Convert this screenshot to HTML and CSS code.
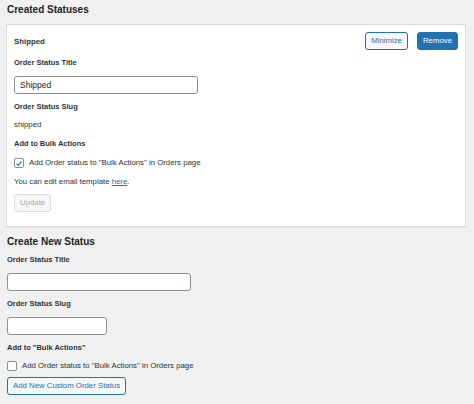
FILE: index.html
```html
<!DOCTYPE html>
<html>
<head>
<meta charset="utf-8">
<link rel="stylesheet" href="styles.css">
</head>
<body>
<div class="page">
  <h2 class="heading">Created Statuses</h2>
  <div class="card">
    <div class="card-head">
      <span class="status-name">Shipped</span>
      <div class="actions">
        <button class="btn btn-outline">Minimize</button>
        <button class="btn btn-primary">Remove</button>
      </div>
    </div>
    <div class="label">Order Status Title</div>
    <input class="input input-wide" type="text" value="Shipped">
    <div class="label">Order Status Slug</div>
    <div class="text">shipped</div>
    <div class="label">Add to Bulk Actions</div>
    <label class="check-row"><span class="checkbox checked"><svg viewBox="0 0 10 10" width="9" height="9"><path d="M2 5.2 L4.2 7.4 L8.2 2.4" fill="none" stroke="#2271b1" stroke-width="1.4"/></svg></span>Add Order status to "Bulk Actions" in Orders page</label>
    <div class="text text-note">You can edit email template <a href="#" class="link">here</a>.</div>
    <button class="btn btn-disabled">Update</button>
  </div>
  <h2 class="heading heading-new">Create New Status</h2>
  <div class="new-form">
    <div class="label">Order Status Title</div>
    <input class="input input-wide" type="text">
    <div class="label">Order Status Slug</div>
    <input class="input input-short" type="text">
    <div class="label">Add to "Bulk Actions"</div>
    <label class="check-row"><span class="checkbox"></span>Add Order status to "Bulk Actions" in Orders page</label>
    <button class="btn btn-outline">Add New Custom Order Status</button>
  </div>
</div>
</body>
</html>
```
FILE: styles.css
```css
html, body {
  margin: 0;
  padding: 0;
  background: #f0f0f1;
  font-family: "Liberation Sans", Arial, sans-serif;
  color: #1d2327;
}
.page {
  padding: 3px 8px 0 7px;
  width: 459px;
}
.heading {
  font-size: 10px;
  font-weight: bold;
  margin: 0;
  height: 21px;
  line-height: 14px;
}
.heading-new {
  margin-top: 8px;
  height: 20px;
}
.card {
  background: #fff;
  border: 1px solid #dcdcde;
  box-shadow: 0 1px 1px rgba(0,0,0,0.04);
  margin-left: -1px;
  padding: 6px 7px 14px 7px;
  display: flex;
  flex-direction: column;
  align-items: flex-start;
}
.card-head {
  display: flex;
  justify-content: space-between;
  align-items: center;
  width: 100%;
  height: 20px;
  margin-bottom: 7px;
}
.actions {
  display: flex;
  gap: 9px;
}
.status-name {
  font-size: 7.8px;
  font-weight: bold;
  color: #2c3338;
}
.label {
  font-size: 7.5px;
  font-weight: bold;
  color: #2c3338;
  line-height: 10px;
  margin-bottom: 8px;
}
.text {
  font-size: 7.8px;
  line-height: 10px;
  margin-bottom: 9px;
  color: #2c3338;
}
.text-note {
  margin-bottom: 7px;
}
.input {
  box-sizing: border-box;
  height: 18px;
  border: 1px solid #8c8f94;
  border-radius: 3px;
  background: #fff;
  font-family: inherit;
  font-size: 8.5px;
  padding: 0 5px;
  color: #1d2327;
  margin: 0 0 8px 0;
  display: block;
}
.input-wide { width: 184px; }
.input-short { width: 100px; }
.check-row {
  display: flex;
  align-items: center;
  font-size: 7.8px;
  line-height: 10px;
  color: #2c3338;
  margin-top: 1px;
  margin-bottom: 9px;
}
.new-form .check-row {
  margin-top: 0;
  margin-bottom: 6px;
}
.checkbox {
  box-sizing: border-box;
  width: 10px;
  height: 10px;
  border: 1px solid #8c8f94;
  border-radius: 2px;
  background: #fff;
  margin-right: 5px;
  display: inline-flex;
  align-items: center;
  justify-content: center;
}
.checkbox svg { display: block; }
.link {
  color: #2271b1;
  text-decoration: underline;
}
.btn {
  box-sizing: border-box;
  height: 18px;
  font-family: inherit;
  font-size: 7.8px;
  border-radius: 3px;
  padding: 0 5px;
  cursor: pointer;
  line-height: 16px;
}
.btn-outline {
  background: #f6f7f7;
  border: 1px solid #2271b1;
  color: #2271b1;
}
.btn-primary {
  background: #2271b1;
  border: 1px solid #2271b1;
  color: #fff;
  padding: 0 5px;
}
.btn-disabled {
  background: #f6f7f7;
  border: 1px solid #dcdcde;
  color: #a7aaad;
}
.new-form {
  display: flex;
  flex-direction: column;
  align-items: flex-start;
}
```
